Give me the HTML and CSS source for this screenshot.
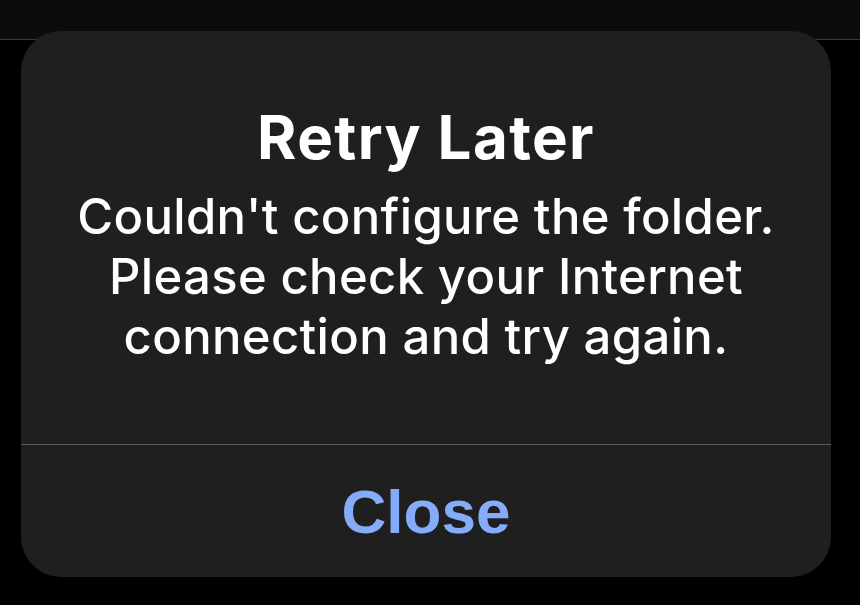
FILE: index.html
```html
<!DOCTYPE html>
<html lang="en">
<head>
<meta charset="utf-8">
<title>Retry Later</title>
<link rel="stylesheet" href="styles.css">
</head>
<body>
<div class="topbar"></div>
<div class="alert" role="alertdialog">
  <div class="alert-content">
    <h1 class="alert-title">Retry Later</h1>
    <p class="alert-message">Couldn't configure the folder.<br>Please check your Internet<br>connection and try again.</p>
  </div>
  <button class="alert-button">Close</button>
</div>
</body>
</html>
```
FILE: styles.css
```css
html, body {
  margin: 0;
  padding: 0;
  background: #000;
  width: 860px;
  height: 605px;
  overflow: hidden;
}
.topbar {
  height: 39px;
  background: #0c0c0c;
  border-bottom: 1px solid #3a3a3a;
}
.alert {
  position: absolute;
  left: 21px;
  top: 31px;
  width: 810px;
  height: 546px;
  background: #1f1f1f;
  border-radius: 40px;
  display: flex;
  flex-direction: column;
  overflow: hidden;
  font-family: Inter, "Noto Sans", sans-serif;
  color: #fff;
}
.alert-content {
  height: 414px;
  box-sizing: border-box;
  padding-top: 74px;
  border-bottom: 1px solid #5a5a5a;
  text-align: center;
}
.alert-title {
  margin: 0;
  font-size: 60px;
  line-height: 64px;
  font-weight: 700;
  letter-spacing: 1.4px;
}
.alert-message {
  margin: 18px 0 0;
  font-size: 49px;
  line-height: 60px;
  font-weight: 500;
  letter-spacing: 0.35px;
}
.alert-button {
  flex: 1;
  border: 0;
  background: transparent;
  color: #84acf8;
  font-family: "Liberation Sans", Arial, sans-serif;
  font-weight: 700;
  font-size: 62px;
  padding: 0;
  cursor: pointer;
}
```
